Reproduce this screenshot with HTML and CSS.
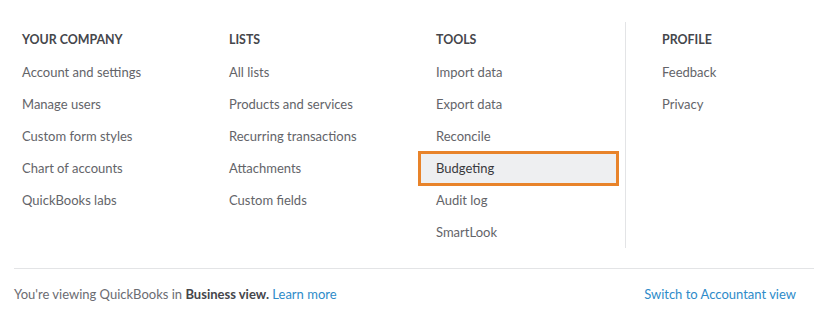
FILE: index.html
```html
<!DOCTYPE html>
<html>
<head>
<meta charset="utf-8">
<link rel="stylesheet" href="styles.css">
</head>
<body>
<div class="panel">
  <div class="menus">
    <div class="col col-company">
      <div class="head">YOUR COMPANY</div>
      <div class="item">Account and settings</div>
      <div class="item">Manage users</div>
      <div class="item">Custom form styles</div>
      <div class="item">Chart of accounts</div>
      <div class="item">QuickBooks labs</div>
    </div>
    <div class="col col-lists">
      <div class="head">LISTS</div>
      <div class="item">All lists</div>
      <div class="item">Products and services</div>
      <div class="item">Recurring transactions</div>
      <div class="item">Attachments</div>
      <div class="item">Custom fields</div>
    </div>
    <div class="col col-tools">
      <div class="head">TOOLS</div>
      <div class="item">Import data</div>
      <div class="item">Export data</div>
      <div class="item">Reconcile</div>
      <div class="item item-hl">Budgeting</div>
      <div class="item">Audit log</div>
      <div class="item">SmartLook</div>
    </div>
    <div class="col col-profile">
      <div class="head">PROFILE</div>
      <div class="item">Feedback</div>
      <div class="item">Privacy</div>
    </div>
  </div>
  <div class="footer">
    <div class="note">You're viewing QuickBooks in <b>Business view.</b> <a class="link">Learn more</a></div>
    <a class="link">Switch to Accountant view</a>
  </div>
</div>
</body>
</html>
```
FILE: styles.css
```css
html, body {
  margin: 0;
  padding: 0;
  background: #fff;
}
body {
  font-family: Lato, "Open Sans", sans-serif;
  font-size: 13px;
  color: #636469;
  width: 830px;
  height: 318px;
  overflow: hidden;
}
.panel {
  padding-top: 22px;
}
.menus {
  display: flex;
  padding-left: 22px;
  height: 226px;
}
.col {
  display: flex;
  flex-direction: column;
}
.col-company, .col-lists {
  width: 207px;
}
.col-tools {
  width: 189px;
  border-right: 1px solid #e3e4e6;
}
.col-profile {
  padding-left: 36px;
}
.head {
  height: 34px;
  line-height: 34px;
  padding-top: 1px;
  box-sizing: border-box;
  font-weight: 700;
  font-size: 12.4px;
  color: #45464b;
}
.item {
  height: 32px;
  line-height: 32px;
  white-space: nowrap;
}
.item-hl {
  height: 35px;
  line-height: 29px;
  margin: -1px 6px -2px -18px;
  padding-left: 15px;
  border: 3px solid #e8832a;
  background: #eeeff1;
  color: #393a3d;
  box-sizing: border-box;
}
.footer {
  margin: 20px 16px 0 14px;
  border-top: 1px solid #e3e4e6;
  display: flex;
  justify-content: space-between;
  align-items: center;
  height: 50px;
  padding-right: 18px;
}
.note {
  color: #6b6c72;
}
.note b {
  color: #45464b;
  font-weight: 700;
}
.link {
  color: #2e8bc9;
  font-weight: 400;
}
```
